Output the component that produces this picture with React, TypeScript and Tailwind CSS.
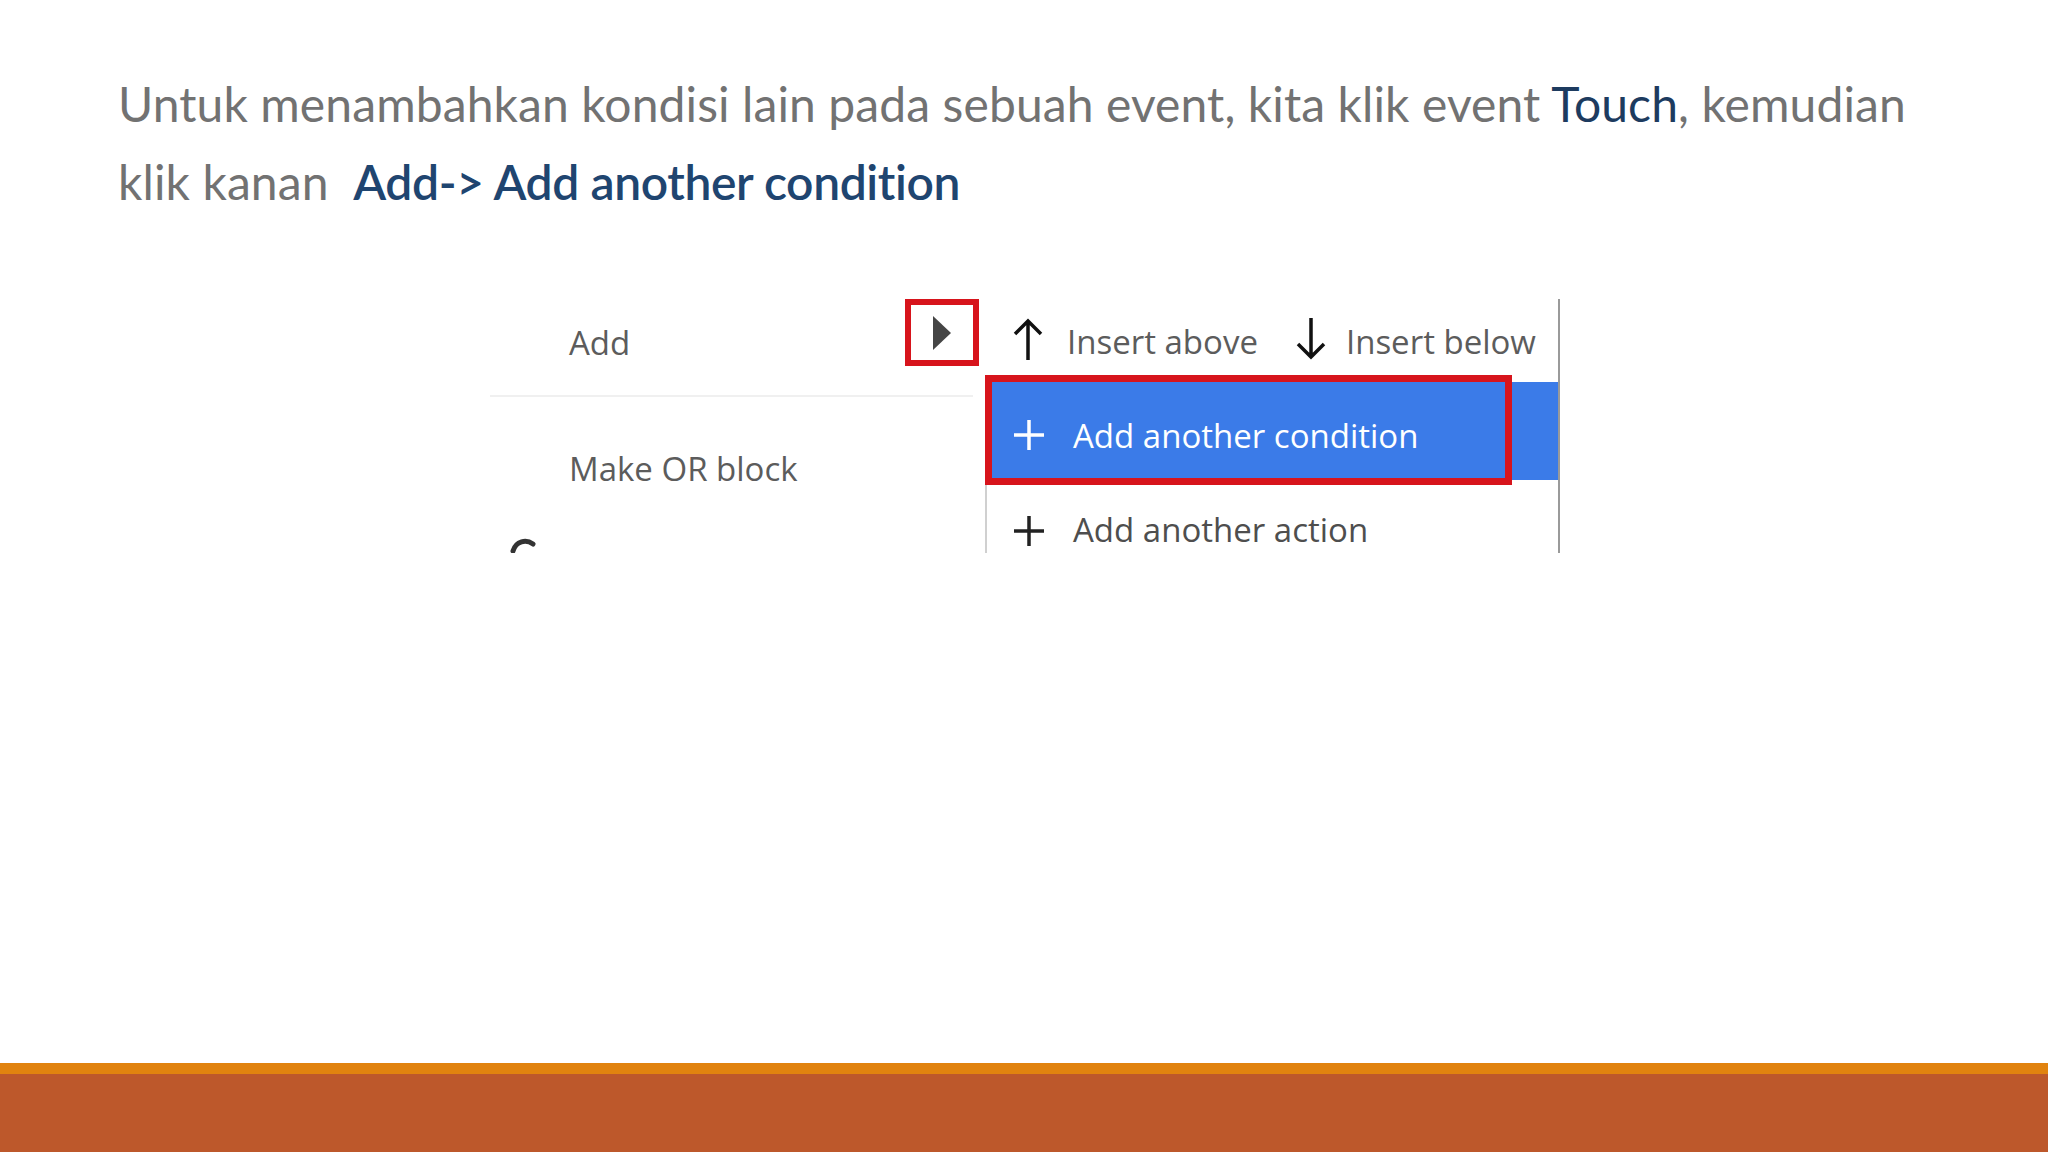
const menuFont = { fontFamily: '"Open Sans", "Liberation Sans", sans-serif' };

function ArrowUp({ className }: { className?: string }) {
  return (
    <svg width="34" height="44" viewBox="0 0 34 44" className={className}>
      <path d="M17 43 V4 M4 17 L17 4 L30 17" fill="none" stroke="currentColor" strokeWidth="3.5" />
    </svg>
  );
}

function ArrowDown({ className }: { className?: string }) {
  return (
    <svg width="34" height="44" viewBox="0 0 34 44" className={className}>
      <path d="M17 1 V40 M4 27 L17 40 L30 27" fill="none" stroke="currentColor" strokeWidth="3.5" />
    </svg>
  );
}

function Plus({ className }: { className?: string }) {
  return (
    <svg width="32" height="32" viewBox="0 0 32 32" className={className}>
      <path d="M16 1 V31 M1 16 H31" fill="none" stroke="currentColor" strokeWidth="3.5" />
    </svg>
  );
}

export default function App() {
  return (
    <div className="flex h-screen w-full flex-col bg-white">
      <p
        className="pl-[118px] pr-[80px] pt-[65px] text-[48px] leading-[78px] tracking-[0.1px] text-[#727272]"
        style={{ fontFamily: 'Lato, "Liberation Sans", sans-serif' }}
      >
        Untuk menambahkan kondisi lain pada sebuah event, kita klik event{' '}
        <span className="text-[#1d3b5f]">Touch</span>, kemudian
        <br />
        klik kanan&nbsp; <span className="font-semibold tracking-[-0.4px] text-[#1f4570]">Add-&gt; Add another condition</span>
      </p>

      <div className="ml-[490px] mt-[78px] flex h-[254px] w-[1070px] overflow-hidden text-[33px] text-[#5c5c5c]" style={menuFont}>
        {/* left menu */}
        <div className="flex w-[495px] shrink-0 flex-col">
          <div className="mr-[12px] flex h-[98px] items-start justify-between border-b-2 border-[#f0f0f0] pl-[79px] pr-[3px]">
            <span className="pt-[27px] leading-[33px]">Add</span>
            <div className="mr-[-9px] flex h-[67px] w-[74px] items-center justify-center border-[6px] border-[#d7141c]">
              <svg width="20" height="34" viewBox="0 0 20 34">
                <path d="M1 0 L19 17 L1 34 Z" fill="#454545" />
              </svg>
            </div>
          </div>
          <div className="h-[100px] pl-[79px] pt-[55px] leading-[33px]">Make OR block</div>
          <div className="pl-[20px] pt-[38px]">
            <svg width="26" height="18" viewBox="0 0 26 18">
              <path d="M3 16 C6 6, 16 4, 23 9" fill="none" stroke="#333" strokeWidth="5" strokeLinecap="round" />
            </svg>
          </div>
        </div>

        {/* submenu */}
        <div className="flex w-[575px] shrink-0 flex-col border-r-2 border-[#9a9a9a]">
          <div className="flex h-[76px] items-start pl-[26px] pt-[18px] text-[#5c5c5c]">
            <ArrowUp className="text-[#111]" />
            <span className="ml-[22px] pt-[8px] leading-[33px]">Insert above</span>
            <ArrowDown className="ml-[36px] text-[#111]" />
            <span className="ml-[18px] pt-[8px] leading-[33px]">Insert below</span>
          </div>
          <div className="flex flex-1 flex-col border-l-2 border-[#d0d0d0]">
            <div className="relative mt-[7px] flex h-[98px] items-center bg-[#3b7be8] pl-[26px] pt-[8px] text-white">
              <Plus />
              <span className="ml-[28px] leading-[33px]">Add another condition</span>
              <div className="absolute left-[-2px] top-[-7px] h-[110px] w-[527px] border-[7px] border-[#d7141c]" />
            </div>
            <div className="flex items-start pl-[26px] pt-[33px] text-[#4e4e4e]">
              <Plus className="mt-[2px] text-[#222]" />
              <span className="ml-[28px] leading-[33px]">Add another action</span>
            </div>
          </div>
        </div>
      </div>

      <div className="flex-1" />
      <div className="h-[11px] bg-[#e1830f]" />
      <div className="h-[78px] bg-[#bd582b]" />
    </div>
  );
}
